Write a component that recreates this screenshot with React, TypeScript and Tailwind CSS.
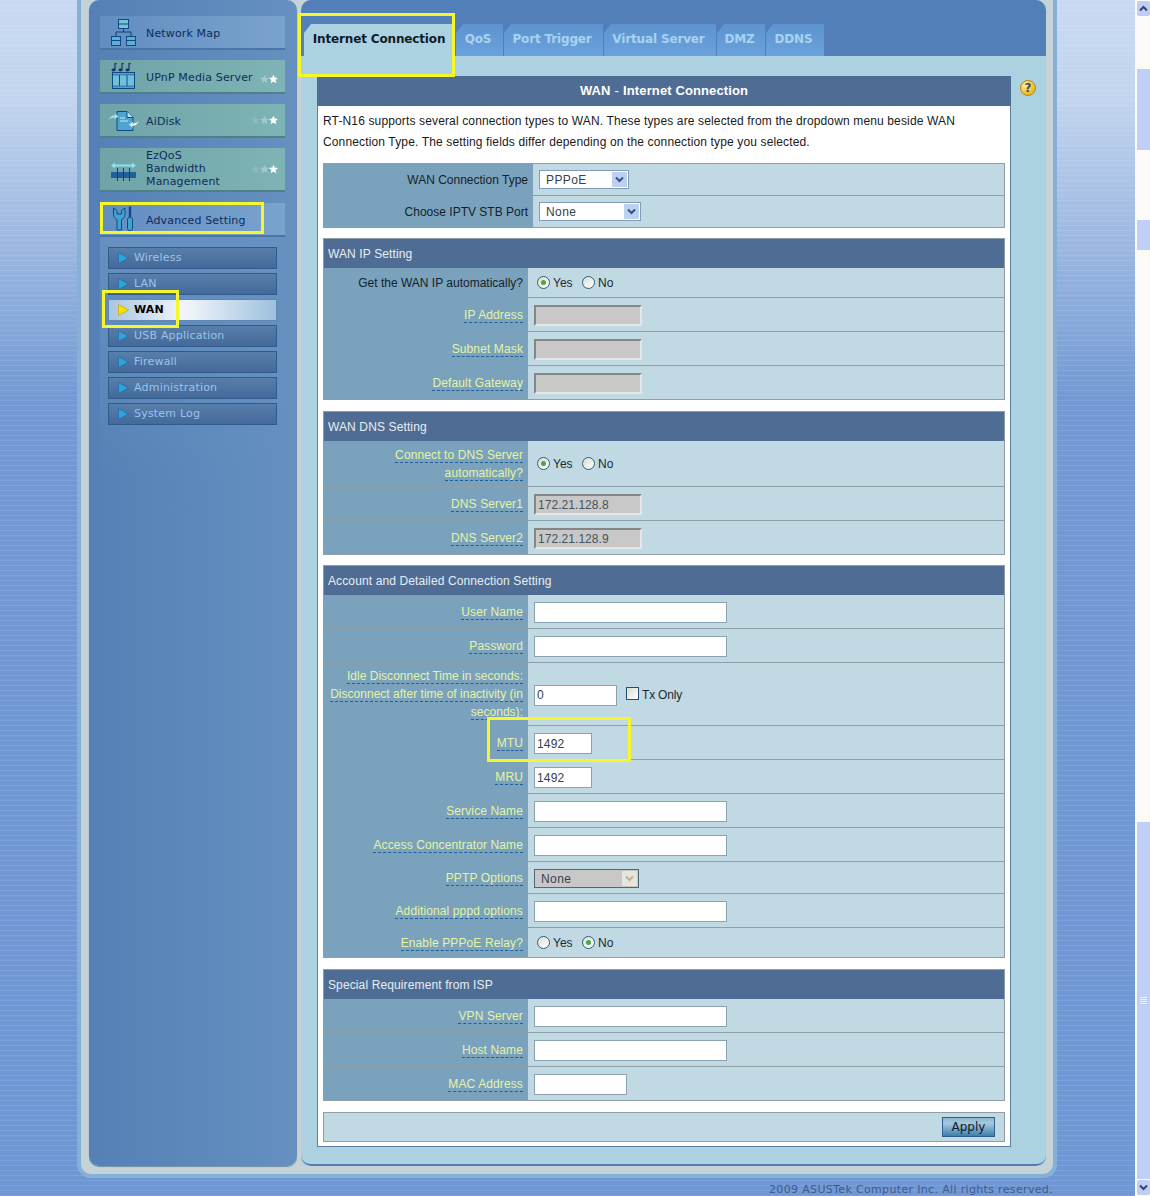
import type { ReactNode } from 'react'

const menuItems = [
  { label: 'Network Map', icon: 'map', teal: false, h: 'h-[34px]', mt: 'mt-0', stars: 0 },
  { label: 'UPnP Media Server', icon: 'media', teal: true, h: 'h-[34px]', mt: 'mt-[10px]', stars: 2 },
  { label: 'AiDisk', icon: 'disk', teal: true, h: 'h-[34px]', mt: 'mt-[10px]', stars: 3 },
  { label: 'EzQoS\nBandwidth\nManagement', icon: 'qos', teal: true, h: 'h-[44px]', mt: 'mt-[10px]', stars: 3 },
  { label: 'Advanced Setting', icon: 'tools', teal: false, h: 'h-[34px]', mt: 'mt-[11px]', stars: 0 },
]

const subItems = ['Wireless', 'LAN', 'WAN', 'USB Application', 'Firewall', 'Administration', 'System Log']

const tabs = [
  { label: 'Internet Connection', w: 'w-[150px]' },
  { label: 'QoS', w: 'w-[47px]' },
  { label: 'Port Trigger', w: 'w-[99px]' },
  { label: 'Virtual Server', w: 'w-[112px]' },
  { label: 'DMZ', w: 'w-[48px]' },
  { label: 'DDNS', w: 'w-[58px]' },
]

const MenuIcon = ({ name }: { name: string }) => {
  if (name === 'map') {
    return (
      <svg width="34" height="34" viewBox="0 0 34 34" className="shrink-0">
        <path d="M16.5 12v4M9 20v-4h15v4" fill="none" stroke="#0f3f77" strokeWidth="1" />
        <rect x="11.5" y="3.5" width="10" height="9" fill="#76c0d8" stroke="#0f4a85" />
        <path d="M11.5 8h10" stroke="#0f4a85" />
        <rect x="4.5" y="20.5" width="9" height="9" fill="#5fb0d0" stroke="#0f4a85" />
        <path d="M4.5 24.5h9" stroke="#0f4a85" />
        <rect x="19.5" y="20.5" width="9" height="9" fill="#5fb0d0" stroke="#0f4a85" />
        <path d="M19.5 24.5h9" stroke="#0f4a85" />
      </svg>
    )
  }
  if (name === 'media') {
    return (
      <svg width="34" height="34" viewBox="0 0 34 34" className="shrink-0">
        <path d="M8 3v7M15 3v7M22 3v7" stroke="#17365f" strokeWidth="1.2" />
        <path d="M8 3l2 1M15 3l2 1M22 3l2 1" stroke="#17365f" />
        <ellipse cx="6.5" cy="10" rx="2" ry="1.4" fill="#17365f" />
        <ellipse cx="13.5" cy="10" rx="2" ry="1.4" fill="#17365f" />
        <ellipse cx="20.5" cy="10" rx="2" ry="1.4" fill="#17365f" />
        <rect x="5.5" y="12.5" width="22" height="16" fill="#6fc0dc" stroke="#0f4a85" />
        <path d="M12.5 15v11M20 15v11" stroke="#0f4a85" />
        <path d="M5.5 14.5h22M5.5 26.5h22" stroke="#0f4a85" strokeWidth="2" strokeDasharray="1 1" />
      </svg>
    )
  }
  if (name === 'disk') {
    return (
      <svg width="34" height="34" viewBox="0 0 34 34" className="shrink-0">
        <path d="M10 7.500h10l6 6v13H10z" fill="#4fa5d2" stroke="#0f4a85" />
        <path d="M20 7.500v6h6" fill="#b7e2f2" stroke="#0f4a85" />
        <path d="M13 14h5M13 17h8" stroke="#bfe6f4" />
        <path d="M1.500 16c1-3 4-5 7-5l-1.500-2.500 4.500 4-4.500 3 1-2c-3 0-5 1-6.500 2.500z" fill="#9fe3f3" />
        <path d="M32 17c-1 3-4 5-7 5l1.500 2.500-4.500-4 4.500-3-1 2c3 0 5-1 6.500-2.500z" fill="#d8f2fa" />
      </svg>
    )
  }
  if (name === 'qos') {
    return (
      <svg width="34" height="34" viewBox="0 0 34 34" className="shrink-0">
        <path d="M4 12.500l4-3v2h17v-2l4 3-4 3v-2H8v2z" fill="#8ee2f2" />
        <rect x="4" y="19" width="25" height="6" fill="#1f5f9c" />
        <path d="M10.500 15v13M16.500 15v13M22.500 15v13" stroke="#143f6d" />
      </svg>
    )
  }
  return (
    <svg width="34" height="34" viewBox="0 0 34 34" className="shrink-0">
      <path
        d="M6.500 5v6.500c0 2.500 1.500 4 3.500 5V27h4.500V16.500c2-1 3.500-2.500 3.500-5V5l-3.500 2.500v3.500h-4.500V7.500z"
        fill="#3ea3d0"
        stroke="#0f4a85"
      />
      <path d="M23 3.500v11" stroke="#0f4a85" strokeWidth="2.400" />
      <rect x="20.500" y="14.500" width="5" height="13" rx="2" fill="#3ea3d0" stroke="#0f4a85" />
    </svg>
  )
}

const Star = ({ className }: { className: string }) => (
  <svg width="9" height="9" viewBox="0 0 10 10" className={className}>
    <polygon points="5,0 6.400,3.400 10,3.800 7.300,6.100 8.100,9.800 5,7.900 1.900,9.800 2.700,6.100 0,3.800 3.600,3.400" fill="#ffffff" />
  </svg>
)

const Stars = ({ count }: { count: number }) => (
  <div className={`absolute right-[7px] top-1/2 flex -translate-y-1/2 gap-0 ${count === 2 ? 'mt-[3px]' : 'mt-0'}`}>
    {count === 3 ? <Star className="opacity-10" /> : null}
    <Star className="opacity-30" />
    <Star className="opacity-100" />
  </div>
)

const Sidebar = () => (
  <div className="h-[1166px] w-[208px] shrink-0 rounded-[10px] bg-[linear-gradient(90deg,#5480b6,#6590c0)] pl-[11px] pt-[16px] shadow-[0_1px_1px_#6f8fa8]">
    <div className="w-[185px]">
      {menuItems.map((item) => (
        <div
          key={item.label}
          className={`${item.h} ${item.mt} relative flex items-center border-b-2 pl-[7px] pt-[2px] ${
            item.teal
              ? 'border-[#4f8088] bg-[linear-gradient(90deg,#6ea3a8,#7fb4b6)]'
              : 'border-[#4a75a4] bg-[linear-gradient(90deg,#618dc0,#7aa3cd)]'
          }`}
        >
          <MenuIcon name={item.icon} />
          <span
            className={`ml-[5px] whitespace-pre-line font-['DejaVu_Sans',sans-serif] text-[11px] leading-[13px] tracking-[0.15px] text-[#0f2c5c] ${
              item.icon === 'qos' ? 'mb-[4px]' : ''
            }`}
          >
            {item.label}
          </span>
          {item.stars ? <Stars count={item.stars} /> : null}
        </div>
      ))}
      <div className="h-[243px] bg-[linear-gradient(180deg,#6590c0,rgba(101,144,192,0))] px-[8px] pt-[10px]">
        <div className="flex flex-col gap-[4px]">
          {subItems.map((name) => {
            const active = name === 'WAN'
            return (
              <div
                key={name}
                className={`flex h-[22px] items-center border pl-[9px] ${
                  active
                    ? 'border-[#5f88b2] bg-[linear-gradient(90deg,#a9c6e2,#e6eef7_38%,#f2f6fb_46%,#9cc0de_100%)]'
                    : 'border-[#2f5b8c] bg-[linear-gradient(180deg,#587fab,#44699a)]'
                }`}
              >
                <svg width="11" height="12" viewBox="0 0 11 12" className="shrink-0">
                  <polygon
                    points="0.500,0.500 10.500,6 0.500,11.500"
                    fill={active ? '#f4e400' : '#2fa3da'}
                    stroke={active ? '#c9a800' : '#1f6aa5'}
                    strokeWidth="0.7"
                  />
                </svg>
                <span
                  className={`ml-[5px] font-['DejaVu_Sans',sans-serif] text-[11px] tracking-[0.2px] ${
                    active ? 'font-bold text-black' : 'text-[#9cc3e8]'
                  }`}
                >
                  {name}
                </span>
              </div>
            )
          })}
        </div>
      </div>
    </div>
  </div>
)

const TextInput = ({ w, value = '' }: { w: string; value?: string }) => (
  <input
    readOnly
    value={value}
    className={`${w} h-[21px] border border-[#8ba2b5] bg-white px-[2px] font-['Liberation_Sans',sans-serif] text-[12px] tracking-[0.2px] text-[#33424e] outline-none`}
  />
)

const GrayInput = ({ value = '' }: { value?: string }) => (
  <input
    readOnly
    value={value}
    className="h-[21px] w-[108px] border-2 border-b-[#e6e6e6] border-l-[#868686] border-r-[#e6e6e6] border-t-[#868686] bg-[#c8c8c8] px-[2px] font-['Liberation_Sans',sans-serif] text-[12px] tracking-[0.05px] text-[#46525c] outline-none"
  />
)

const Select = ({ w, value, disabled }: { w: string; value: string; disabled?: boolean }) => (
  <div
    className={`${w} flex h-[19px] items-center justify-between border ${
      disabled ? 'border-[#4d6878] bg-[#c8c8c8]' : 'border-[#7f9db9] bg-white'
    }`}
  >
    <span className="pl-[6px] font-['Liberation_Sans',sans-serif] text-[12px] tracking-[0.4px] text-[#33424e]">{value}</span>
    <div
      className={`mr-[1px] flex h-[15px] w-[15px] items-center justify-center rounded-[1px] ${
        disabled ? 'bg-[#e8e6da]' : 'bg-[#bcd0f0]'
      }`}
    >
      <svg width="9" height="7" viewBox="0 0 9 7">
        <path d="M1 1.500l3.500 3.500 3.500-3.500" fill="none" stroke={disabled ? '#b5b3a6' : '#3a5084'} strokeWidth="2" />
      </svg>
    </div>
  </div>
)

const Radio = ({ checked }: { checked?: boolean }) => (
  <span className="flex h-[13px] w-[13px] shrink-0 items-center justify-center rounded-full border border-[#2f5f80] bg-[linear-gradient(135deg,#dcdcd4,#ffffff)]">
    {checked ? <span className="h-[5px] w-[5px] rounded-full bg-[#45a845]" /> : null}
  </span>
)

const YesNo = ({ yes }: { yes: boolean }) => (
  <div className="flex items-center pl-[9px] text-[12px] text-[#1c2a33]">
    <Radio checked={yes} />
    <span className="ml-[3px] w-[29px]">Yes</span>
    <Radio checked={!yes} />
    <span className="ml-[3px]">No</span>
  </div>
)

type RowProps = {
  label: string
  h: string
  plain?: boolean
  wide?: boolean
  tight?: boolean
  children: ReactNode
}

const Row = ({ label, h, plain, wide, tight, children }: RowProps) => (
  <div className={`flex ${h} border-b border-[#8d9ea8]`}>
    <div
      className={`${wide ? 'w-[209px]' : 'w-[204px]'} flex shrink-0 items-center justify-end whitespace-pre bg-[#7aa2bd] pr-[5px] text-right text-[12px] leading-[18px] ${
        tight ? 'tracking-[0.02px]' : 'tracking-[0.12px]'
      }`}
    >
      <div>
        {plain ? (
          <span className="tracking-normal text-[#141f28]">{label}</span>
        ) : (
          <span className="border-b border-dashed border-[#1f5f9e] text-[#e4f4a4]">{label}</span>
        )}
      </div>
    </div>
    <div className="flex flex-1 items-center bg-[#c0d9e3]">{children}</div>
  </div>
)

const Section = ({ title, className, children }: { title?: string; className: string; children: ReactNode }) => (
  <div className={`${className} border-x border-[#8d9ea8]`}>
    {title ? (
      <div className="flex h-[30px] items-center border-t border-[#8d9ea8] bg-[#4f6d94] pl-[4px] text-[12px] tracking-[0.12px] text-[#e6edf3]">
        {title}
      </div>
    ) : (
      <div className="h-px bg-[#8d9ea8]" />
    )}
    {children}
  </div>
)

const Field = ({ children }: { children: ReactNode }) => <div className="mt-[2px] flex items-center pl-[6px]">{children}</div>

const FormPanel = () => (
  <div className="w-[694px] shrink-0">
    <div className="flex h-[30px] items-center justify-center gap-[4px] bg-[#4f6d94] text-[13px] font-bold tracking-[0.12px] text-white">
      <span>WAN</span>
      <span className="font-normal">-</span>
      <span>Internet Connection</span>
    </div>
    <div className="h-[1041px] border-x border-b border-[#5a7fa0] bg-white px-[5px]">
      <p className="h-[57px] pt-[5px] text-[12px] leading-[21px] tracking-[0.14px] text-[#1a1a1a]">
        RT-N16 supports several connection types to WAN. These types are selected from the dropdown menu beside WAN Connection Type. The setting fields differ depending on the connection type you selected.
      </p>

      <Section className="">
        <Row label="WAN Connection Type" h="h-[32px]" plain wide>
          <div className="pl-[6px]">
            <Select w="w-[90px]" value="PPPoE" />
          </div>
        </Row>
        <Row label="Choose IPTV STB Port" h="h-[32px]" plain wide>
          <div className="pl-[6px]">
            <Select w="w-[102px]" value="None" />
          </div>
        </Row>
      </Section>

      <Section title="WAN IP Setting" className="mt-[10px]">
        <Row label="Get the WAN IP automatically?" h="h-[30px]" plain>
          <YesNo yes />
        </Row>
        <Row label="IP Address" h="h-[34px]">
          <Field><GrayInput /></Field>
        </Row>
        <Row label="Subnet Mask" h="h-[34px]">
          <Field><GrayInput /></Field>
        </Row>
        <Row label="Default Gateway" h="h-[34px]">
          <Field><GrayInput /></Field>
        </Row>
      </Section>

      <Section title="WAN DNS Setting" className="mt-[11px]">
        <Row label={'Connect to DNS Server\nautomatically?'} h="h-[46px]">
          <YesNo yes />
        </Row>
        <Row label="DNS Server1" h="h-[34px]">
          <Field><GrayInput value="172.21.128.8" /></Field>
        </Row>
        <Row label="DNS Server2" h="h-[34px]">
          <Field><GrayInput value="172.21.128.9" /></Field>
        </Row>
      </Section>

      <Section title="Account and Detailed Connection Setting" className="mt-[10px]">
        <Row label="User Name" h="h-[34px]">
          <Field><TextInput w="w-[193px]" /></Field>
        </Row>
        <Row label="Password" h="h-[34px]">
          <Field><TextInput w="w-[193px]" /></Field>
        </Row>
        <Row label={'Idle Disconnect Time in seconds:\nDisconnect after time of inactivity (in\nseconds):'} h="h-[63px]" tight>
          <Field>
            <TextInput w="w-[83px]" value="0" />
            <span className="mb-[3px] ml-[9px] h-[13px] w-[13px] border border-[#1f4f78] bg-[linear-gradient(135deg,#dcdcd4,#ffffff)]" />
            <span className="ml-[3px] text-[12px] tracking-[-0.2px] text-[#1c2a33]">Tx Only</span>
          </Field>
        </Row>
        <Row label="MTU" h="h-[34px]">
          <Field><TextInput w="w-[58px]" value="1492" /></Field>
        </Row>
        <Row label="MRU" h="h-[34px]">
          <Field><TextInput w="w-[58px]" value="1492" /></Field>
        </Row>
        <Row label="Service Name" h="h-[34px]">
          <Field><TextInput w="w-[193px]" /></Field>
        </Row>
        <Row label="Access Concentrator Name" h="h-[34px]">
          <Field><TextInput w="w-[193px]" /></Field>
        </Row>
        <Row label="PPTP Options" h="h-[32px]">
          <Field><Select w="w-[105px]" value="None" disabled /></Field>
        </Row>
        <Row label="Additional pppd options" h="h-[34px]">
          <Field><TextInput w="w-[193px]" /></Field>
        </Row>
        <Row label="Enable PPPoE Relay?" h="h-[30px]">
          <YesNo yes={false} />
        </Row>
      </Section>

      <Section title="Special Requirement from ISP" className="mt-[11px]">
        <Row label="VPN Server" h="h-[34px]">
          <Field><TextInput w="w-[193px]" /></Field>
        </Row>
        <Row label="Host Name" h="h-[34px]">
          <Field><TextInput w="w-[193px]" /></Field>
        </Row>
        <Row label="MAC Address" h="h-[34px]">
          <Field><TextInput w="w-[93px]" /></Field>
        </Row>
      </Section>

      <div className="mt-[11px] flex h-[30px] items-center justify-end border border-[#8d9ea8] bg-[#c0d9e3] pr-[9px]">
        <button className="h-[20px] w-[53px] border border-[#2f5f8f] bg-[linear-gradient(180deg,#8fb7d2,#a5c8dd_30%,#3d7fae)] font-['DejaVu_Sans',sans-serif] text-[12px] leading-none text-[#10202c]">
          Apply
        </button>
      </div>
    </div>
  </div>
)

const MainPanel = () => (
  <div className="h-[1166px] w-[745px] shrink-0 overflow-hidden rounded-[10px] border-b-2 border-[#4f7fb0] bg-[#acd1e0]">
    <div className="flex h-[56px] items-end gap-[1px] bg-[#527fb8] pl-[3px]">
      {tabs.map((tab, index) => (
        <div
          key={tab.label}
          className={`${tab.w} ${index === 1 ? 'ml-[1px]' : ''} flex h-[32px] items-center justify-center pb-[3px] font-['DejaVu_Sans',sans-serif] text-[12px] font-bold tracking-[-0.15px] [clip-path:polygon(7px_0,100%_0,100%_100%,0_100%,0_9px)] ${
            index === 0 ? 'bg-[#acd1e0] text-[#0e1c2b]' : 'bg-[linear-gradient(180deg,#5d94d0,#6ba2dd)] pr-[3px] text-[#a8d3ef]'
          }`}
        >
          {tab.label}
        </div>
      ))}
    </div>
    <div className="flex pl-[16px] pt-[20px]">
      <FormPanel />
      <div className="ml-[9px] mt-[4px] flex h-[16px] w-[16px] items-center justify-center rounded-full border border-[#b58a10] bg-[radial-gradient(circle_at_35%_30%,#fff0a0,#e8b828_70%)] font-['DejaVu_Sans',sans-serif] text-[12px] font-bold leading-none text-[#4a4a50]">
        ?
      </div>
    </div>
  </div>
)

const Scrollbar = () => (
  <div className="h-full w-[15px] shrink-0 bg-[#fbfaf6] pl-[2px]">
    <div className="mt-[1px] flex h-[15px] items-center justify-center rounded-[2px] bg-[#c0cdf5]">
      <svg width="9" height="7" viewBox="0 0 9 7">
        <path d="M1 5.500l3.500-3.500 3.500 3.500" fill="none" stroke="#33437a" strokeWidth="2" />
      </svg>
    </div>
    <div className="mt-[53px] h-[81px] bg-[#c0cff7]" />
    <div className="mt-[70px] h-[30px] bg-[#c0cff7]" />
    <div className="mt-[572px] flex h-[357px] items-center justify-center bg-[#c0cff7]">
      <div className="flex w-[7px] flex-col gap-[1px]">
        <span className="h-px bg-[#eef2fd]" />
        <span className="h-px bg-[#eef2fd]" />
        <span className="h-px bg-[#eef2fd]" />
        <span className="h-px bg-[#eef2fd]" />
      </div>
    </div>
    <div className="mt-[1px] flex h-[15px] items-center justify-center rounded-[2px] bg-[#c0cdf5]">
      <svg width="9" height="7" viewBox="0 0 9 7">
        <path d="M1 1.500l3.500 3.500 3.500-3.500" fill="none" stroke="#33437a" strokeWidth="2" />
      </svg>
    </div>
  </div>
)

const Highlight = ({ className }: { className: string }) => (
  <div className={`absolute border-[3px] border-[#f6f62a] ${className}`} />
)

export default function App() {
  return (
    <div className="relative flex h-[1196px] w-[1150px] overflow-hidden font-['Liberation_Sans',Arial,sans-serif]">
      <div className="h-full w-[1135px] shrink-0 bg-[repeating-linear-gradient(180deg,rgba(255,255,255,0.09)_0,rgba(255,255,255,0.09)_1px,transparent_1px,transparent_5px),linear-gradient(180deg,#c9d9f1_0,#c2d4ee_100px,#7299d4_400px,#6f97d3_100%)] pl-[77px]">
        <div className="h-[1178px] w-[980px] rounded-b-[14px] border-x-4 border-b-4 border-x-[#86b0d6] border-b-[#86b0d6] bg-[#c5d3d8] pl-[8px]">
          <div className="flex gap-[4px]">
            <Sidebar />
            <MainPanel />
          </div>
        </div>
        <div className="w-[976px] pt-[5px] text-right font-['DejaVu_Sans',sans-serif] text-[11px] leading-[13px] tracking-[0.34px] text-[#3f5c8c]">
          2009 ASUSTek Computer Inc. All rights reserved.
        </div>
      </div>
      <Scrollbar />
      <Highlight className="left-[298px] top-[13px] h-[64px] w-[157px]" />
      <Highlight className="left-[100px] top-[202px] h-[32px] w-[164px]" />
      <Highlight className="left-[102px] top-[290px] h-[38px] w-[77px]" />
      <Highlight className="left-[487px] top-[717px] h-[45px] w-[144px]" />
    </div>
  )
}
